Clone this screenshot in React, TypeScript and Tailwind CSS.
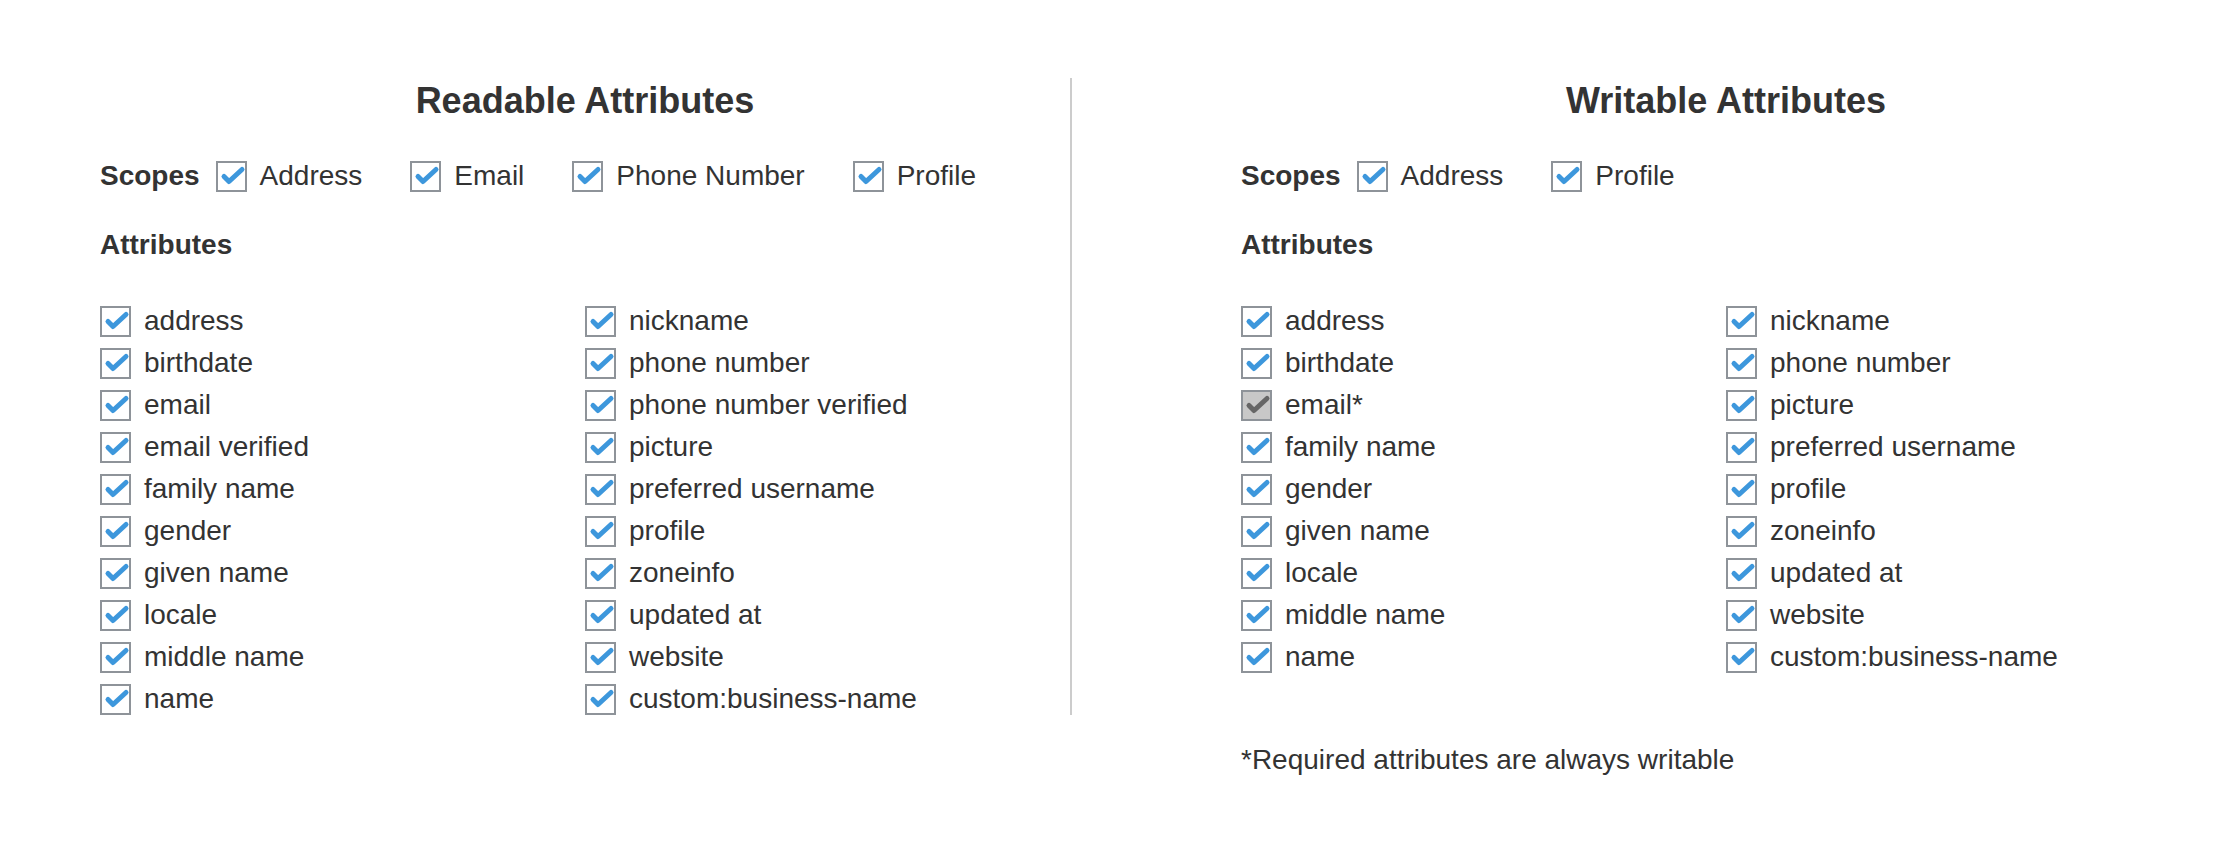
import React from "react";

type Item = { label: string; disabled?: boolean };

function Check({ disabled }: { disabled?: boolean }) {
  return (
    <svg width="31" height="31" viewBox="0 0 31 31" className="shrink-0">
      <rect
        x="1"
        y="1"
        width="29"
        height="29"
        fill={disabled ? "#c8c8c8" : "#ffffff"}
        stroke="#8e9399"
        strokeWidth="2"
      />
      <path
        d="M8 15.5 L13 20.5 L26 8.5"
        fill="none"
        stroke={disabled ? "#666666" : "#3d97dc"}
        strokeWidth="5"
        strokeLinecap="round"
        strokeLinejoin="round"
      />
    </svg>
  );
}

function Row({ item }: { item: Item }) {
  return (
    <div className="flex items-center h-[42px] gap-[13px]">
      <Check disabled={item.disabled} />
      <span className="text-[28px] leading-[42px] text-[#333333]">{item.label}</span>
    </div>
  );
}

function Panel({
  title,
  scopes,
  left,
  right,
  footer,
}: {
  title: string;
  scopes: string[];
  left: Item[];
  right: Item[];
  footer?: string;
}) {
  return (
    <div className="w-[970px] flex flex-col pt-[2px]">
      <h2 className="text-[36px] leading-[42px] font-bold text-[#333333] text-center">{title}</h2>
      <div className="flex items-center mt-[33px] h-[42px]">
        <span className="text-[28px] leading-[42px] font-bold text-[#333333] mr-[16px]">Scopes</span>
        {scopes.map((s) => (
          <div key={s} className="flex items-center gap-[13px] mr-[48px]">
            <Check />
            <span className="text-[28px] leading-[42px] text-[#333333]">{s}</span>
          </div>
        ))}
      </div>
      <div className="mt-[27px] text-[28px] leading-[42px] font-bold text-[#333333]">Attributes</div>
      <div className="grid grid-cols-2 mt-[34px]">
        <div className="flex flex-col">
          {left.map((i) => (
            <Row key={i.label} item={i} />
          ))}
        </div>
        <div className="flex flex-col">
          {right.map((i) => (
            <Row key={i.label} item={i} />
          ))}
        </div>
      </div>
      {footer && (
        <div className="mt-[61px] text-[28px] leading-[42px] text-[#333333]">{footer}</div>
      )}
    </div>
  );
}

const L = (arr: string[]): Item[] => arr.map((label) => ({ label }));

export default function App() {
  return (
    <div
      className="w-[2228px] h-[850px] bg-white flex items-start pt-[78px] pl-[100px]"
      style={{ fontFamily: '"Liberation Sans", Arial, sans-serif' }}
    >
      <Panel
        title="Readable Attributes"
        scopes={["Address", "Email", "Phone Number", "Profile"]}
        left={L([
          "address",
          "birthdate",
          "email",
          "email verified",
          "family name",
          "gender",
          "given name",
          "locale",
          "middle name",
          "name",
        ])}
        right={L([
          "nickname",
          "phone number",
          "phone number verified",
          "picture",
          "preferred username",
          "profile",
          "zoneinfo",
          "updated at",
          "website",
          "custom:business-name",
        ])}
      />
      <div className="w-[2px] h-[637px] bg-[#cccccc]" />
      <div className="ml-[169px]">
        <Panel
          title="Writable Attributes"
          scopes={["Address", "Profile"]}
          left={[
            { label: "address" },
            { label: "birthdate" },
            { label: "email*", disabled: true },
            { label: "family name" },
            { label: "gender" },
            { label: "given name" },
            { label: "locale" },
            { label: "middle name" },
            { label: "name" },
          ]}
          right={L([
            "nickname",
            "phone number",
            "picture",
            "preferred username",
            "profile",
            "zoneinfo",
            "updated at",
            "website",
            "custom:business-name",
          ])}
          footer="*Required attributes are always writable"
        />
      </div>
    </div>
  );
}
